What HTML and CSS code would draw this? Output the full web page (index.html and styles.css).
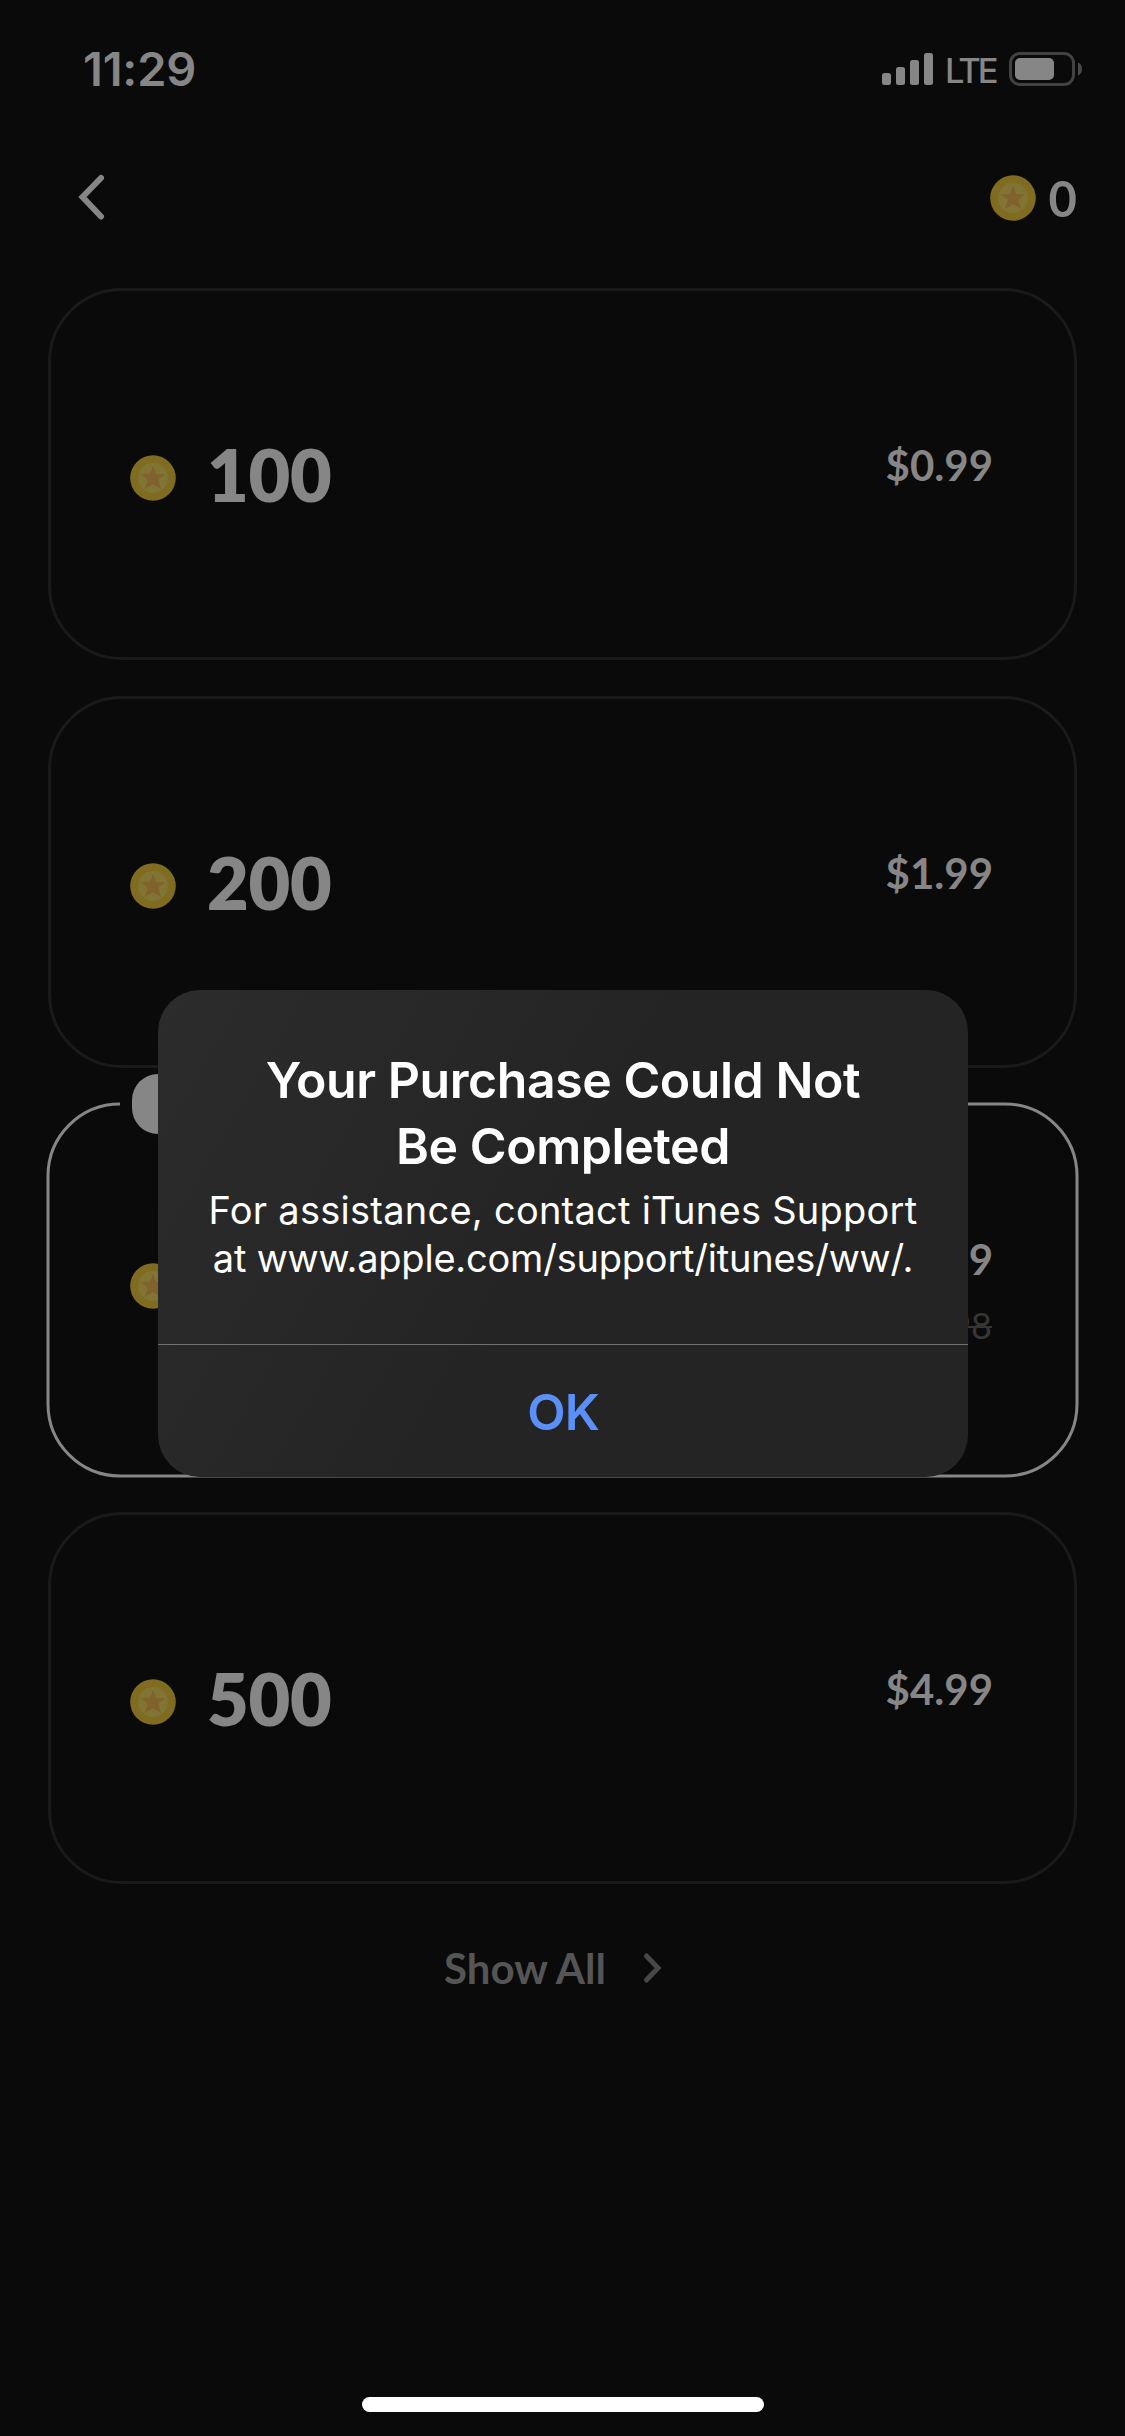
FILE: index.html
```html
<!DOCTYPE html>
<html lang="en">
<head>
<meta charset="utf-8">
<title>Coins</title>
<link rel="stylesheet" href="styles.css">
</head>
<body>
<svg width="0" height="0" class="defs">
  <symbol id="coin" viewBox="0 0 46 46">
    <circle cx="23" cy="23" r="22.8" fill="#7f6c20"/>
    <circle cx="23" cy="23" r="15" fill="#817534"/>
    <path fill="#80622f" d="M23 10.700l3.300 8.200 9 .300-7 5.600 2.700 8.900-8-4.500-8 4.500 2.700-8.900-7-5.600 9-.300z"/>
  </symbol>
</svg>
<div class="screen">
  <div class="status">
    <span class="time">11:29</span>
    <div class="indicators">
      <svg class="signal" width="51" height="32" viewBox="0 0 51 32" fill="#868686">
        <rect x="0" y="20" width="9" height="12" rx="2.500"/><rect x="14" y="14" width="9" height="18" rx="2.500"/>
        <rect x="28" y="7" width="9" height="25" rx="2.500"/><rect x="42" y="0" width="9" height="32" rx="2.500"/>
      </svg>
      <span class="carrier">LTE</span>
      <svg class="battery" width="73" height="34" viewBox="0 0 73 34">
        <rect x="1.500" y="1.500" width="63" height="31" rx="9.500" fill="none" stroke="#424242" stroke-width="3"/>
        <rect x="6" y="6" width="39" height="22" rx="5" fill="#868686"/>
        <path d="M69 10.500c5.300 2 5.300 11 0 13z" fill="#4a4a4a"/>
      </svg>
    </div>
  </div>
  <div class="nav">
    <svg width="28" height="48" viewBox="0 0 28 48" fill="none" stroke="#868686" stroke-width="6" stroke-linecap="round"><path d="M24 4L5.500 23 24 42.500" /></svg>
    <div class="balance"><svg width="46" height="46"><use href="#coin"/></svg><span>0</span></div>
  </div>
  <div class="packs">
    <div class="pack">
      <div class="amount"><svg width="46" height="46"><use href="#coin"/></svg><span>100</span></div>
      <div class="price">$0.99</div>
    </div>
    <div class="pack">
      <div class="amount"><svg width="46" height="46"><use href="#coin"/></svg><span>200</span></div>
      <div class="price">$1.99</div>
    </div>
    <div class="pack selected">
      <svg class="outline" width="1033" height="376" viewBox="-2 -2 1033 376" fill="none" stroke="#868686" stroke-width="3">
        <path d="M72 0A72 72 0 0 0 0 72V300A72 72 0 0 0 72 372H957A72 72 0 0 0 1029 300V72A72 72 0 0 0 957 0H400"/>
      </svg>
      <div class="badge"></div>
      <div class="amount"><svg width="46" height="46"><use href="#coin"/></svg></div>
      <div class="price">$2.99<s>$5.98</s></div>
    </div>
    <div class="pack">
      <div class="amount"><svg width="46" height="46"><use href="#coin"/></svg><span>500</span></div>
      <div class="price">$4.99</div>
    </div>
  </div>
  <div class="more">
    <span>Show All</span>
    <svg width="20" height="32" viewBox="0 0 20 32" fill="none" stroke="#47474a" stroke-width="5" stroke-linecap="round"><path d="M4.500 4L16 16 4.500 28"/></svg>
  </div>
  <div class="home"></div>
  <div class="alert">
    <div class="message">
      <h1>Your Purchase Could Not<br>Be Completed</h1>
      <p><span class="l1">For assistance, contact iTunes Support</span><br><span class="l2">at www.apple.com/support/itunes/ww/.</span></p>
    </div>
    <div class="ok">OK</div>
  </div>
</div>
</body>
</html>
```
FILE: styles.css
```css
* { box-sizing: border-box; }
body { margin: 0; background: #0a0a0a; color: #868686; font-family: Lato, sans-serif; }
svg { display: block; flex: none; }
.defs { position: absolute; }
.screen { position: relative; width: 1125px; height: 2436px; display: flex; flex-direction: column; overflow: hidden; }
.status { display: flex; justify-content: space-between; align-items: flex-start; height: 140px; padding: 50px 43px 0 83px; font-family: Inter, sans-serif; }
.time { margin-top: -5px; font-size: 47px; line-height: 48px; font-weight: 600; letter-spacing: -.2px; }
.indicators { display: flex; align-items: center; margin-top: 2px; height: 34px; }
.carrier { width: 51px; margin: 3px 13px 0 12px; font-size: 34.5px; line-height: 34px; font-weight: 500; letter-spacing: -3px; white-space: nowrap; }
.nav { display: flex; justify-content: space-between; align-items: flex-start; height: 148px; padding: 34px 48px 0 77px; }
.balance { display: flex; align-items: center; gap: 13px; margin-top: 1px; font-size: 49px; line-height: 46px; font-weight: 700; }
.packs { display: flex; flex-direction: column; gap: 36px; padding: 0 48px; }
.pack { position: relative; display: flex; justify-content: space-between; align-items: flex-start; height: 372px; padding: 0 81px 0 79px; border: 3px solid #1a1a1a; border-radius: 74px; }
.amount { display: flex; align-items: center; gap: 31px; margin-top: 164px; height: 46px; font-size: 72px; font-weight: 800; letter-spacing: -.2px; }
.amount span { margin-top: -8px; }
.price { margin-top: 148px; font-size: 42px; line-height: 52px; font-weight: 700; text-align: right; }
.selected { border-color: transparent; }
.selected .amount { margin-top: 156px; }
.selected .price { margin-top: 126px; }
.outline { position: absolute; left: -5px; top: -5px; }
.badge { position: absolute; left: 81px; top: -33px; width: 180px; height: 60px; border-radius: 26px; background: #868686; }
.price s { display: block; font-size: 36px; line-height: 44px; font-weight: 400; color: #363636; margin: 18px 1px 0 0; text-decoration-thickness: 2px; }
.more { display: flex; align-items: center; gap: 36px; margin: 58px 0 0 444px; height: 52px; font-size: 42px; font-weight: 700; color: #555; }
.more span { width: 162px; white-space: nowrap; }
.home { width: 402px; height: 15px; border-radius: 7.500px; background: #fff; margin: auto 0 24px 362px; }
.alert { position: absolute; left: 158px; top: 990px; width: 810px; height: 487px; border-radius: 42px; background: linear-gradient(120deg, #2c2c2c 0%, #242424 50%, #242424 100%); color: #fff; font-family: Inter, sans-serif; text-align: center; overflow: hidden; }
.message { height: 355px; padding-top: 57px; border-bottom: 1px solid #707070; white-space: nowrap; }
h1 { margin: 0; font-size: 50px; line-height: 66px; font-weight: 600; letter-spacing: -.45px; }
p { margin: 7px 0 0; font-size: 38px; line-height: 48px; }
.l1 { letter-spacing: .25px; }
.l2 { letter-spacing: -.22px; }
.ok { color: #5a90f7; font-size: 50px; line-height: 134px; font-weight: 600; letter-spacing: -1px; }
```
